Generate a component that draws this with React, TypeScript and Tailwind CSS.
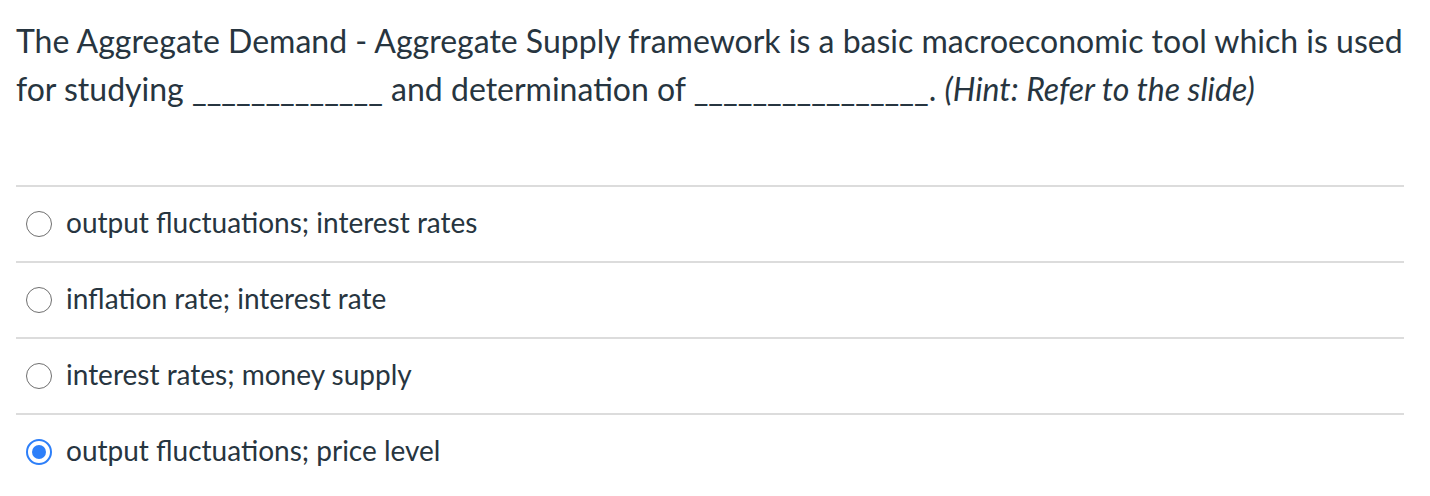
import React from "react";

const options = [
  { label: "output fluctuations; interest rates", checked: false },
  { label: "inflation rate; interest rate", checked: false },
  { label: "interest rates; money supply", checked: false },
  { label: "output fluctuations; price level", checked: true },
];

function Radio({ checked }: { checked: boolean }) {
  if (checked) {
    return (
      <span className="flex h-[26px] w-[26px] shrink-0 items-center justify-center rounded-full border-[2.5px] border-[#2d7ff9] bg-white">
        <span className="h-[14px] w-[14px] rounded-full bg-[#2d7ff9]" />
      </span>
    );
  }
  return (
    <span className="h-[26px] w-[26px] shrink-0 rounded-full border-[1.5px] border-[#6f6f6f] bg-white" />
  );
}

export default function App() {
  return (
    <div
      className="min-h-[496px] w-[1430px] bg-white text-[#273540]"
      style={{ fontFamily: "Lato, 'Open Sans', sans-serif" }}
    >
      <div className="px-4 pt-[17px]">
        <p className="text-[32px] leading-[48px]">
          The Aggregate Demand - Aggregate Supply framework is a basic macroeconomic tool which is used
          for studying _____________ and determination of ________________.{" "}
          <em>(Hint: Refer to the slide)</em>
        </p>
        <div className="mt-[72px] w-[1388px]">
          {options.map((o) => (
            <div
              key={o.label}
              className="flex h-[76px] items-center gap-[14px] border-t-2 border-[#dcdcdc] pl-[10px]"
            >
              <Radio checked={o.checked} />
              <span className="pb-[4px] text-[28px] leading-none">{o.label}</span>
            </div>
          ))}
        </div>
      </div>
    </div>
  );
}
